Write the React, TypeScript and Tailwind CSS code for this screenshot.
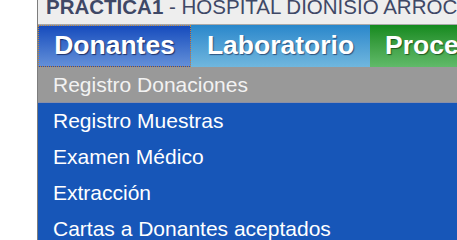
import React from "react";

export default function App() {
  const items = ["Registro Muestras", "Examen Médico", "Extracción", "Cartas a Donantes aceptados"];
  return (
    <div
      className="w-[457px] h-[240px] overflow-hidden bg-white flex"
      style={{ fontFamily: '"Liberation Sans", Arial, sans-serif' }}
    >
      <div className="w-[37px] shrink-0" />
      <div className="flex-1 border-l border-[#7d7d7d] flex flex-col min-w-0 h-[240px] overflow-hidden">
        <div className="h-[25px] shrink-0 bg-[#eeeeee] border-b border-[#a8a8a8] overflow-hidden whitespace-nowrap pl-[8px]">
          <div className="text-[20.5px] leading-[20px] mt-[-3px] text-[#3f4866]">
            <span className="font-bold">PRACTICA1</span> - HOSPITAL DIONISIO ARROCHA
          </div>
        </div>
        <div className="h-[42px] shrink-0 flex whitespace-nowrap overflow-hidden">
          <div className="w-[153px] shrink-0 border border-dotted border-[#c2863a] bg-gradient-to-b from-[#164bbd] to-[#638fd8] flex items-center justify-center text-white font-bold text-[26.5px] [text-shadow:1px_1px_1px_rgba(0,0,40,0.6)]">
            Donantes
          </div>
          <div className="w-[179px] shrink-0 bg-gradient-to-b from-[#2887cb] to-[#70b7de] flex items-center justify-center text-white font-bold text-[26.5px] [text-shadow:1px_1px_1px_rgba(0,0,40,0.5)]">
            Laboratorio
          </div>
          <div className="flex-1 bg-gradient-to-b from-[#128a1d] to-[#60ba69] flex items-center pl-[15px] text-white font-bold text-[26.5px] [text-shadow:1px_1px_1px_rgba(0,40,0,0.6)]">
            Procesamiento
          </div>
        </div>
        <div className="flex-1 bg-[#1756b8] flex flex-col whitespace-nowrap min-h-0">
          <div className="h-[36px] shrink-0 bg-[#999999] border-b border-[#8a8fa8] flex items-center pl-[15px] text-[#f2f2f2] text-[21px]">
            Registro Donaciones
          </div>
          {items.map((t) => (
            <div key={t} className="h-[36px] shrink-0 flex items-center pl-[15px] text-white text-[21px]">
              {t}
            </div>
          ))}
        </div>
      </div>
    </div>
  );
}
